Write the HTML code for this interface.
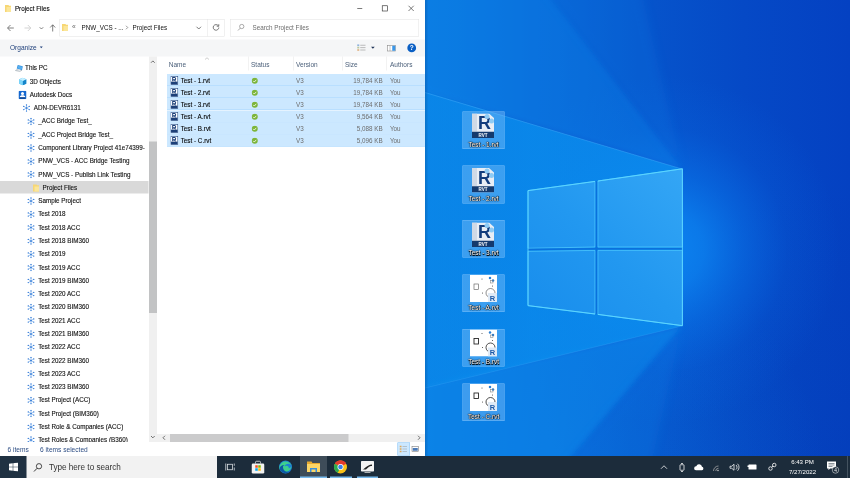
<!DOCTYPE html>
<html><head><meta charset="utf-8"><title>Project Files</title>
<style>
html,body{margin:0;padding:0;background:#0650c4;}
body{width:850px;height:478px;overflow:hidden;position:relative;font-family:"Liberation Sans",sans-serif;}
#wall{position:absolute;left:0;top:0;}
#ui{position:absolute;left:0;top:0;width:1700px;height:956px;transform:scale(.5);transform-origin:0 0;font-size:12.6px;color:#111;}
#ui *{box-sizing:border-box;}
.nt,.fn,#title{-webkit-text-stroke:.22px #111;}
.abs{position:absolute;}
#win{position:absolute;left:0;top:0;width:850px;height:911.7px;background:#fff;overflow:hidden;}
#title{position:absolute;left:29.8px;top:9px;line-height:16px;font-size:12.6px;color:#000;white-space:nowrap;}
#tool{position:absolute;left:0;top:78.6px;width:850px;height:34.4px;background:#f5f6f7;}
.box{position:absolute;border:1px solid #e2e2e2;background:#fff;}
.nr{position:absolute;left:0;width:296.6px;height:25px;margin-top:-0.2px;white-space:nowrap;}
.nr.sel{background:#d9d9d9;}
.ni{position:absolute;top:54%;}
.ni .ic{position:absolute;top:0;left:0;transform:translateY(-50%);}
.nt{position:absolute;top:0;line-height:26px;}
#nav{position:absolute;left:0;top:113px;width:298px;height:771px;overflow:hidden;}
#navin{position:absolute;left:0;top:-113px;}
.hd{position:absolute;top:121.2px;line-height:16px;color:#4c607a;font-size:13px;}
.sep{position:absolute;top:113px;width:1px;height:28px;background:#e5e5e5;}
.fr{position:absolute;left:334.4px;width:515.6px;height:24.1px;background:#cce8ff;border-bottom:1px solid #a6d6ff;white-space:nowrap;line-height:27.8px;}
.fr span{position:absolute;top:0;}
.fi{left:7px;top:3.6px !important;line-height:0;}
.fn{left:27px;color:#000;}
.fs{left:168.300px;top:6.400px !important;line-height:0;}
.fv{left:257.600px;color:#6d6d6d;}
.fz{right:84.500px;color:#6d6d6d;}
.fa{left:445.600px;color:#6d6d6d;}
#status{position:absolute;left:0;top:884.5px;width:850px;height:27px;background:#fff;color:#2f4f85;line-height:29.5px;font-size:13.2px;}
#task{position:absolute;left:0;top:911.7px;width:1700px;height:44.3px;background:#1c2c3b;}
.dk{position:absolute;left:925.4px;width:83.6px;height:75.2px;background:rgba(150,205,255,.36);border:1px solid rgba(170,215,255,.55);}
.dimg{position:absolute;}
.dl{position:absolute;left:-10px;right:-10px;top:58px;text-align:center;color:#fff;font-size:12.9px;line-height:14px;text-shadow:0 1px 2px #000,0 0 3px #000,1px 1px 1px #000,0 0 2px #000;white-space:nowrap;}
.tb{position:absolute;top:0;height:44.8px;}
.ul{position:absolute;bottom:0;height:2.6px;background:#76b9ed;}
.tray{position:absolute;color:#fff;font-size:12.2px;line-height:13px;text-align:center;white-space:nowrap;}
</style></head><body>
<svg id="wall" width="850" height="478" viewBox="0 0 850 478">
<defs>
<linearGradient id="bg" x1="425" y1="0" x2="850" y2="0" gradientUnits="userSpaceOnUse">
<stop offset="0" stop-color="#0a7ce2"/><stop offset=".25" stop-color="#0868d8"/><stop offset=".5" stop-color="#0655cc"/><stop offset=".75" stop-color="#0549c6"/><stop offset="1" stop-color="#0441c2"/></linearGradient>
<radialGradient id="bot" cx="560" cy="500" r="270" gradientUnits="userSpaceOnUse">
<stop offset="0" stop-color="#0a7ae6" stop-opacity=".4"/><stop offset=".5" stop-color="#0a7ae6" stop-opacity=".22"/><stop offset="1" stop-color="#0a7ae6" stop-opacity="0"/></radialGradient>
<radialGradient id="dark" cx="850" cy="478" r="300" gradientUnits="userSpaceOnUse">
<stop offset="0" stop-color="#032c8c" stop-opacity=".12"/><stop offset="1" stop-color="#032c8c" stop-opacity="0"/></radialGradient>
<linearGradient id="beam" x1="425" y1="0" x2="690" y2="0" gradientUnits="userSpaceOnUse">
<stop offset="0" stop-color="#0a8cec" stop-opacity=".6"/><stop offset=".4" stop-color="#0a8eee" stop-opacity=".8"/><stop offset="1" stop-color="#0c90f0" stop-opacity=".8"/></linearGradient>
<linearGradient id="beam2" x1="425" y1="0" x2="690" y2="0" gradientUnits="userSpaceOnUse">
<stop offset="0" stop-color="#0a8cec" stop-opacity=".1"/><stop offset="1" stop-color="#0c90f0" stop-opacity=".6"/></linearGradient>
<radialGradient id="glow" cx="665" cy="250" r="175" gradientUnits="userSpaceOnUse">
<stop offset="0" stop-color="#0c86f2" stop-opacity=".95"/><stop offset=".22" stop-color="#0c82f0" stop-opacity=".82"/><stop offset=".45" stop-color="#0a7aee" stop-opacity=".48"/><stop offset=".7" stop-color="#0a74ec" stop-opacity=".15"/><stop offset="1" stop-color="#0a74ec" stop-opacity="0"/></radialGradient>
<linearGradient id="pane" x1="528" y1="330" x2="683" y2="170" gradientUnits="userSpaceOnUse">
<stop offset="0" stop-color="#178cec"/><stop offset=".5" stop-color="#2298f0"/><stop offset="1" stop-color="#34a6f5"/></linearGradient>
<filter id="bl3" x="-20%" y="-20%" width="140%" height="140%"><feGaussianBlur stdDeviation="2.5"/></filter>
<filter id="bl" x="-20%" y="-20%" width="140%" height="140%"><feGaussianBlur stdDeviation="5"/></filter>
</defs>
<rect width="850" height="478" fill="url(#bg)"/>
<rect width="850" height="478" fill="url(#bot)"/>
<rect width="850" height="478" fill="url(#dark)"/>
<rect width="850" height="478" fill="url(#glow)"/>
<polygon points="682,169 415,88 415,-15 540,-15" fill="#0a82e8" opacity=".42" filter="url(#bl3)"/>
<polygon points="682,169 540,-15 640,-15" fill="#0a78e2" opacity=".25" filter="url(#bl)"/>
<polygon points="682,326 420,386 420,470 560,470" fill="#0a88ea" opacity=".62" filter="url(#bl3)"/>
<polygon points="682,326 560,470 650,470" fill="#0a78e2" opacity=".3" filter="url(#bl)"/>
<polygon points="425,92.500 682,169 682,326 425,388" fill="url(#beam)"/>
<path d="M425,92.500L682,169" stroke="#4db4ff" stroke-opacity=".45" stroke-width=".9" fill="none"/>
<path d="M425,388L682,326" stroke="#4db4ff" stroke-opacity=".25" stroke-width=".9" fill="none"/>
<rect x="527" y="168" width="156" height="158" fill="#0a72de" opacity="0"/>
<g stroke="#56d0ff" stroke-width=".7" fill="url(#pane)">
<polygon points="528,190.600 595,181.400 595,247 528,248.300"/>
<polygon points="597.900,181 682.400,168.800 682.400,247 597.900,247"/>
<polygon points="528,251.300 595,250.400 595,314 528,305.600"/>
<polygon points="597.900,250.400 682.400,250.400 682.400,325.700 597.900,314.400"/>
</g>
<path d="M596.450,181.200V314.200M528,249.600L595,248.700H682.400" stroke="#0b70dc" stroke-width="1.500" fill="none"/>
<path d="M528,190.600L595,181.400M597.900,181L682.400,168.800V325.700L597.900,314.400M595,314L528,305.600V190.600" stroke="#5fd8ff" stroke-width=".9" fill="none"/>
</svg>

<div id="ui">
<div class="dk" style="top:222.6px"><svg class="dimg" style="left:18px;top:3.600px" width="44" height="49" viewBox="0 0 44 49"><path d="M0 0h34l10 9v40H0z" fill="#e9eef5"/><path d="M0 0h10v36H0z" fill="#cfd9e6"/><rect x="0" y="36.500" width="44" height="12.500" fill="#143a6e"/><text x="25" y="31.500" font-family="Liberation Sans, sans-serif" font-weight="bold" font-size="36" fill="#123c7c" text-anchor="middle">R</text><circle cx="30" cy="6" r="5" fill="#8ecbf5"/><circle cx="39" cy="15" r="5" fill="#8ecbf5"/><text x="22" y="46.500" font-family="Liberation Sans, sans-serif" font-weight="bold" font-size="9" fill="#fff" text-anchor="middle">RVT</text></svg><span class="dl">Test - 1.rvt</span></div>
<div class="dk" style="top:331.4px"><svg class="dimg" style="left:18px;top:3.600px" width="44" height="49" viewBox="0 0 44 49"><path d="M0 0h34l10 9v40H0z" fill="#e9eef5"/><path d="M0 0h10v36H0z" fill="#cfd9e6"/><rect x="0" y="36.500" width="44" height="12.500" fill="#143a6e"/><text x="25" y="31.500" font-family="Liberation Sans, sans-serif" font-weight="bold" font-size="36" fill="#123c7c" text-anchor="middle">R</text><circle cx="30" cy="6" r="5" fill="#8ecbf5"/><circle cx="39" cy="15" r="5" fill="#8ecbf5"/><text x="22" y="46.500" font-family="Liberation Sans, sans-serif" font-weight="bold" font-size="9" fill="#fff" text-anchor="middle">RVT</text></svg><span class="dl">Test - 2.rvt</span></div>
<div class="dk" style="top:440.2px"><svg class="dimg" style="left:18px;top:3.600px" width="44" height="49" viewBox="0 0 44 49"><path d="M0 0h34l10 9v40H0z" fill="#e9eef5"/><path d="M0 0h10v36H0z" fill="#cfd9e6"/><rect x="0" y="36.500" width="44" height="12.500" fill="#143a6e"/><text x="25" y="31.500" font-family="Liberation Sans, sans-serif" font-weight="bold" font-size="36" fill="#123c7c" text-anchor="middle">R</text><circle cx="30" cy="6" r="5" fill="#8ecbf5"/><circle cx="39" cy="15" r="5" fill="#8ecbf5"/><text x="22" y="46.500" font-family="Liberation Sans, sans-serif" font-weight="bold" font-size="9" fill="#fff" text-anchor="middle">RVT</text></svg><span class="dl">Test - 3.rvt</span></div>
<div class="dk" style="top:549.0px"><svg class="dimg" style="left:14px;top:0.400px" width="54" height="54" viewBox="0 0 54 54"><rect width="54" height="54" fill="#fff"/><rect x="8" y="18" width="9" height="11" fill="none" stroke="#555" stroke-width="1.200"/><circle cx="41" cy="36" r="9" fill="none" stroke="#444" stroke-width="1.200"/><rect x="36" y="36" width="18" height="18" fill="#dfeaf6"/><text x="45" y="51" font-family="Liberation Sans, sans-serif" font-weight="bold" font-size="15" fill="#1d5aa8" text-anchor="middle">R</text><circle cx="40" cy="6" r="2.500" fill="#2a7fd4"/><circle cx="46" cy="11" r="2.500" fill="#2a7fd4"/><rect x="41" y="11" width="5" height="5" fill="none" stroke="#777" stroke-width="1"/><circle cx="24" cy="8" r="1" fill="#333"/><circle cx="25" cy="36" r="1" fill="#333"/><circle cx="45" cy="22" r="1" fill="#333"/></svg><span class="dl">Test - A.rvt</span></div>
<div class="dk" style="top:657.8px"><svg class="dimg" style="left:14px;top:0.400px" width="54" height="54" viewBox="0 0 54 54"><rect width="54" height="54" fill="#fff"/><rect x="8" y="18" width="9" height="11" fill="none" stroke="#1a1a1a" stroke-width="1.700"/><circle cx="41" cy="36" r="9" fill="none" stroke="#222" stroke-width="1.600"/><rect x="36" y="36" width="18" height="18" fill="#dfeaf6"/><text x="45" y="51" font-family="Liberation Sans, sans-serif" font-weight="bold" font-size="15" fill="#1d5aa8" text-anchor="middle">R</text><circle cx="40" cy="6" r="2.500" fill="#2a7fd4"/><circle cx="46" cy="11" r="2.500" fill="#2a7fd4"/><rect x="41" y="11" width="5" height="5" fill="none" stroke="#777" stroke-width="1"/><circle cx="24" cy="8" r="1" fill="#333"/><circle cx="25" cy="36" r="1" fill="#333"/><circle cx="45" cy="22" r="1" fill="#333"/></svg><span class="dl">Test - B.rvt</span></div>
<div class="dk" style="top:766.6px"><svg class="dimg" style="left:14px;top:0.400px" width="54" height="54" viewBox="0 0 54 54"><rect width="54" height="54" fill="#fff"/><rect x="8" y="18" width="9" height="11" fill="none" stroke="#1a1a1a" stroke-width="1.700"/><circle cx="41" cy="36" r="9" fill="none" stroke="#222" stroke-width="1.600"/><rect x="36" y="36" width="18" height="18" fill="#dfeaf6"/><text x="45" y="51" font-family="Liberation Sans, sans-serif" font-weight="bold" font-size="15" fill="#1d5aa8" text-anchor="middle">R</text><circle cx="40" cy="6" r="2.500" fill="#2a7fd4"/><circle cx="46" cy="11" r="2.500" fill="#2a7fd4"/><rect x="41" y="11" width="5" height="5" fill="none" stroke="#777" stroke-width="1"/><circle cx="24" cy="8" r="1" fill="#333"/><circle cx="25" cy="36" r="1" fill="#333"/><circle cx="45" cy="22" r="1" fill="#333"/></svg><span class="dl">Test - C.rvt</span></div>
<div id="win">
 <svg class="abs" style="left:10px;top:8.800px" width="12" height="16" viewBox="0 0 12 16"><path d="M0 1h7l1 1.500h4V15H0z" fill="#f7d774"/><path d="M3 5h9v10H3z" fill="#fbe69a"/></svg>
 <div id="title">Project Files</div>
 <!-- window controls -->
 <svg class="abs" style="left:700px;top:0" width="150" height="36" viewBox="0 0 150 36"><g stroke="#333" stroke-width="1.300" fill="none"><path d="M14.500 17h10"/><rect x="64.500" y="11.500" width="10.500" height="10.500"/><path d="M117 11.500l10.500 10.500M127.500 11.500l-10.500 10.500"/></g></svg>
 <!-- nav arrows -->
 <svg class="abs" style="left:0;top:38px" width="120" height="36" viewBox="0 0 120 36"><g fill="none" stroke-width="1.500"><path d="M27.600 18h-12M21 12l-6 6 6 6" stroke="#555"/><path d="M49 18h12M55.600 12l6 6-6 6" stroke="#c4c4c4"/><path d="M79.400 16.500l3.500 3.500 3.500-3.500" stroke="#555"/><path d="M105.400 25V12M100.400 17l5-5.500 5 5.500" stroke="#555"/></g></svg>
 <div class="box" style="left:118.800px;top:38.200px;width:330.200px;height:34.800px"></div>
 <div class="abs" style="left:414.600px;top:38.200px;width:1px;height:34.800px;background:#e2e2e2"></div>
 <svg class="abs" style="left:124px;top:46.500px" width="12" height="16" viewBox="0 0 12 16"><path d="M0 1h7l1 1.500h4V15H0z" fill="#f7d774"/><path d="M3 5h9v10H3z" fill="#fbe69a"/></svg>
 <div class="abs" style="left:144px;top:44.500px;line-height:16px;color:#666;font-size:13.500px">«</div>
 <div class="abs" style="left:163px;top:47.500px;line-height:16px;white-space:nowrap">PNW_VCS - ...</div>
 <svg class="abs" style="left:250px;top:50px" width="8" height="10" viewBox="0 0 8 10"><path d="M2 1.500l3.500 3.500L2 8.500" stroke="#555" stroke-width="1.200" fill="none"/></svg>
 <div class="abs" style="left:265px;top:47.500px;line-height:16px;white-space:nowrap">Project Files</div>
 <svg class="abs" style="left:390px;top:50px" width="16" height="12" viewBox="0 0 16 12"><path d="M3 3.500l4.500 4.500L12 3.500" stroke="#444" stroke-width="1.400" fill="none"/></svg>
 <svg class="abs" style="left:424px;top:47px" width="16" height="16" viewBox="0 0 16 16"><path d="M12.500 4.500A5.600 5.600 0 1 0 13.600 8" stroke="#444" stroke-width="1.400" fill="none"/><path d="M13.500 1.500v4h-4" stroke="#444" stroke-width="1.400" fill="none"/></svg>
 <div class="box" style="left:459.800px;top:38.200px;width:378px;height:34.800px"></div>
 <svg class="abs" style="left:474px;top:47px" width="16" height="16" viewBox="0 0 16 16"><circle cx="9.500" cy="6" r="4.300" stroke="#777" stroke-width="1.200" fill="none"/><path d="M6.500 9.300L2 14" stroke="#777" stroke-width="1.300"/></svg>
 <div class="abs" style="left:505px;top:47.500px;line-height:16px;color:#6d6d6d;white-space:nowrap">Search Project Files</div>
 <div id="tool"></div>
 <div class="abs" style="left:20px;top:87px;line-height:16px;color:#1e3f7a;font-size:13.100px;white-space:nowrap">Organize</div>
 <svg class="abs" style="left:79px;top:92px" width="8" height="6" viewBox="0 0 8 6"><path d="M.5 1h6L3.500 4.500z" fill="#1e3f7a"/></svg>
 <!-- toolbar right icons -->
 <svg class="abs" style="left:710px;top:84px" width="130" height="24" viewBox="0 0 130 24"><g stroke="#9a9a9a" stroke-width="1.300"><path d="M10.500 6.500h10.500M10.500 11.200h10.500M10.500 16h10.500"/></g><g><rect x="4.500" y="4.800" width="4" height="3.400" fill="#8fb2dc"/><rect x="4.500" y="9.500" width="4" height="3.400" fill="#b9c7a0"/><rect x="4.500" y="14.300" width="4" height="3.400" fill="#e0b487"/></g><path d="M32 9.500h7.500l-3.750 4.200z" fill="#1e3255"/><rect x="65" y="7" width="16" height="11" fill="#fff" stroke="#8a8a8a" stroke-width="1.200"/><path d="M70 7v11" stroke="#8a8a8a" stroke-width="1"/><rect x="74.500" y="7.500" width="6" height="10" fill="#3a96e8"/><circle cx="113.400" cy="11.800" r="8.800" fill="#0a5fc4"/><text x="113.400" y="16.400" font-family="Liberation Sans, sans-serif" font-weight="bold" font-size="13" fill="#fff" text-anchor="middle">?</text></svg>

 <div id="nav"><div id="navin">
<div class="nr" style="top:123.42px"><span class="ni" style="left:30.0px"><svg class="ic" width="17" height="15" viewBox="0 0 17 15"><path d="M5.500 0.500l10 2.500-1.500 8L3.500 7.500z" fill="#2f8fdc"/><path d="M6.300 1.800l8.200 2-1.200 5.700L4.800 6.800z" fill="#56aef0"/><path d="M0.500 11.500l3-3.500 10.500 3z" fill="#c9d2da"/><path d="M0.500 11.500l9 1.800 4.500-2.300" stroke="#7b8894" stroke-width="1" fill="none"/></svg></span><span class="nt" style="left:50.2px">This PC</span></div>
<div class="nr" style="top:149.98px"><span class="ni" style="left:37.4px"><svg class="ic" width="17" height="16" viewBox="0 0 17 16"><path d="M8.5 0.5l7 3v9l-7 3-7-3v-9z" fill="#35b6f0"/><path d="M8.5 7l7-3.5v9l-7 3z" fill="#1684c8"/><path d="M8.5 7l-7-3.5v9l7 3z" fill="#7fd6fa"/><path d="M8.5 0.5l7 3-7 3.5-7-3.500z" fill="#c6efff"/></svg></span><span class="nt" style="left:59.4px">3D Objects</span></div>
<div class="nr" style="top:176.54px"><span class="ni" style="left:37.4px"><svg class="ic" width="16" height="17" viewBox="0 0 16 17"><rect x="0" y="0" width="16" height="17" rx="2.5" fill="#1568d0"/><circle cx="8" cy="5.6" r="3" fill="#fff"/><path d="M2.5 13c0-3 2.500-4 5.500-4s5.500 1 5.500 4z" fill="#fff"/><rect x="2.5" y="13.500" width="11" height="2" fill="#0a2f6b"/></svg></span><span class="nt" style="left:59.4px">Autodesk Docs</span></div>
<div class="nr" style="top:203.10px"><span class="ni" style="left:45.4px"><svg class="ic" width="16" height="16" viewBox="0 0 16 16"><g stroke="#5b9be6" stroke-width="1.1" fill="none"><path d="M8 1.5v13M2.4 4.7l11.2 6.6M13.6 4.7L2.4 11.3"/></g><g fill="#2f78d6"><circle cx="8" cy="1.8" r="1.35"/><circle cx="8" cy="14.2" r="1.35"/><circle cx="2.5" cy="4.8" r="1.35"/><circle cx="13.5" cy="4.8" r="1.35"/><circle cx="2.5" cy="11.2" r="1.35"/><circle cx="13.5" cy="11.2" r="1.35"/><circle cx="8" cy="8" r="1.7"/></g></svg></span><span class="nt" style="left:67.6px">ADN-DEVR6131</span></div>
<div class="nr" style="top:229.66px"><span class="ni" style="left:54.2px"><svg class="ic" width="16" height="16" viewBox="0 0 16 16"><g stroke="#5b9be6" stroke-width="1.1" fill="none"><path d="M8 1.5v13M2.4 4.7l11.2 6.6M13.6 4.7L2.4 11.3"/></g><g fill="#2f78d6"><circle cx="8" cy="1.8" r="1.35"/><circle cx="8" cy="14.2" r="1.35"/><circle cx="2.5" cy="4.8" r="1.35"/><circle cx="13.5" cy="4.8" r="1.35"/><circle cx="2.5" cy="11.2" r="1.35"/><circle cx="13.5" cy="11.2" r="1.35"/><circle cx="8" cy="8" r="1.7"/></g></svg></span><span class="nt" style="left:76.4px">_ACC Bridge Test_</span></div>
<div class="nr" style="top:256.22px"><span class="ni" style="left:54.2px"><svg class="ic" width="16" height="16" viewBox="0 0 16 16"><g stroke="#5b9be6" stroke-width="1.1" fill="none"><path d="M8 1.5v13M2.4 4.7l11.2 6.6M13.6 4.7L2.4 11.3"/></g><g fill="#2f78d6"><circle cx="8" cy="1.8" r="1.35"/><circle cx="8" cy="14.2" r="1.35"/><circle cx="2.5" cy="4.8" r="1.35"/><circle cx="13.5" cy="4.8" r="1.35"/><circle cx="2.5" cy="11.2" r="1.35"/><circle cx="13.5" cy="11.2" r="1.35"/><circle cx="8" cy="8" r="1.7"/></g></svg></span><span class="nt" style="left:76.4px">_ACC Project Bridge Test_</span></div>
<div class="nr" style="top:282.78px"><span class="ni" style="left:54.2px"><svg class="ic" width="16" height="16" viewBox="0 0 16 16"><g stroke="#5b9be6" stroke-width="1.1" fill="none"><path d="M8 1.5v13M2.4 4.7l11.2 6.6M13.6 4.7L2.4 11.3"/></g><g fill="#2f78d6"><circle cx="8" cy="1.8" r="1.35"/><circle cx="8" cy="14.2" r="1.35"/><circle cx="2.5" cy="4.8" r="1.35"/><circle cx="13.5" cy="4.8" r="1.35"/><circle cx="2.5" cy="11.2" r="1.35"/><circle cx="13.5" cy="11.2" r="1.35"/><circle cx="8" cy="8" r="1.7"/></g></svg></span><span class="nt" style="left:76.4px">Component Library Project 41e74399-</span></div>
<div class="nr" style="top:309.34px"><span class="ni" style="left:54.2px"><svg class="ic" width="16" height="16" viewBox="0 0 16 16"><g stroke="#5b9be6" stroke-width="1.1" fill="none"><path d="M8 1.5v13M2.4 4.7l11.2 6.6M13.6 4.7L2.4 11.3"/></g><g fill="#2f78d6"><circle cx="8" cy="1.8" r="1.35"/><circle cx="8" cy="14.2" r="1.35"/><circle cx="2.5" cy="4.8" r="1.35"/><circle cx="13.5" cy="4.8" r="1.35"/><circle cx="2.5" cy="11.2" r="1.35"/><circle cx="13.5" cy="11.2" r="1.35"/><circle cx="8" cy="8" r="1.7"/></g></svg></span><span class="nt" style="left:76.4px">PNW_VCS - ACC Bridge Testing</span></div>
<div class="nr" style="top:335.90px"><span class="ni" style="left:54.2px"><svg class="ic" width="16" height="16" viewBox="0 0 16 16"><g stroke="#5b9be6" stroke-width="1.1" fill="none"><path d="M8 1.5v13M2.4 4.7l11.2 6.6M13.6 4.7L2.4 11.3"/></g><g fill="#2f78d6"><circle cx="8" cy="1.8" r="1.35"/><circle cx="8" cy="14.2" r="1.35"/><circle cx="2.5" cy="4.8" r="1.35"/><circle cx="13.5" cy="4.8" r="1.35"/><circle cx="2.5" cy="11.2" r="1.35"/><circle cx="13.5" cy="11.2" r="1.35"/><circle cx="8" cy="8" r="1.7"/></g></svg></span><span class="nt" style="left:76.4px">PNW_VCS - Publish Link Testing</span></div>
<div class="nr sel" style="top:362.46px"><span class="ni" style="left:66.4px"><svg class="ic" width="12" height="16" viewBox="0 0 12 16"><path d="M0 1h7l1 1.5h4V15H0z" fill="#f7d774"/><path d="M3 5h9v10H3z" fill="#fbe69a"/></svg></span><span class="nt" style="left:85.2px">Project Files</span></div>
<div class="nr" style="top:389.02px"><span class="ni" style="left:54.2px"><svg class="ic" width="16" height="16" viewBox="0 0 16 16"><g stroke="#5b9be6" stroke-width="1.1" fill="none"><path d="M8 1.5v13M2.4 4.7l11.2 6.6M13.6 4.7L2.4 11.3"/></g><g fill="#2f78d6"><circle cx="8" cy="1.8" r="1.35"/><circle cx="8" cy="14.2" r="1.35"/><circle cx="2.5" cy="4.8" r="1.35"/><circle cx="13.5" cy="4.8" r="1.35"/><circle cx="2.5" cy="11.2" r="1.35"/><circle cx="13.5" cy="11.2" r="1.35"/><circle cx="8" cy="8" r="1.7"/></g></svg></span><span class="nt" style="left:76.4px">Sample Project</span></div>
<div class="nr" style="top:415.58px"><span class="ni" style="left:54.2px"><svg class="ic" width="16" height="16" viewBox="0 0 16 16"><g stroke="#5b9be6" stroke-width="1.1" fill="none"><path d="M8 1.5v13M2.4 4.7l11.2 6.6M13.6 4.7L2.4 11.3"/></g><g fill="#2f78d6"><circle cx="8" cy="1.8" r="1.35"/><circle cx="8" cy="14.2" r="1.35"/><circle cx="2.5" cy="4.8" r="1.35"/><circle cx="13.5" cy="4.8" r="1.35"/><circle cx="2.5" cy="11.2" r="1.35"/><circle cx="13.5" cy="11.2" r="1.35"/><circle cx="8" cy="8" r="1.7"/></g></svg></span><span class="nt" style="left:76.4px">Test 2018</span></div>
<div class="nr" style="top:442.14px"><span class="ni" style="left:54.2px"><svg class="ic" width="16" height="16" viewBox="0 0 16 16"><g stroke="#5b9be6" stroke-width="1.1" fill="none"><path d="M8 1.5v13M2.4 4.7l11.2 6.6M13.6 4.7L2.4 11.3"/></g><g fill="#2f78d6"><circle cx="8" cy="1.8" r="1.35"/><circle cx="8" cy="14.2" r="1.35"/><circle cx="2.5" cy="4.8" r="1.35"/><circle cx="13.5" cy="4.8" r="1.35"/><circle cx="2.5" cy="11.2" r="1.35"/><circle cx="13.5" cy="11.2" r="1.35"/><circle cx="8" cy="8" r="1.7"/></g></svg></span><span class="nt" style="left:76.4px">Test 2018 ACC</span></div>
<div class="nr" style="top:468.70px"><span class="ni" style="left:54.2px"><svg class="ic" width="16" height="16" viewBox="0 0 16 16"><g stroke="#5b9be6" stroke-width="1.1" fill="none"><path d="M8 1.5v13M2.4 4.7l11.2 6.6M13.6 4.7L2.4 11.3"/></g><g fill="#2f78d6"><circle cx="8" cy="1.8" r="1.35"/><circle cx="8" cy="14.2" r="1.35"/><circle cx="2.5" cy="4.8" r="1.35"/><circle cx="13.5" cy="4.8" r="1.35"/><circle cx="2.5" cy="11.2" r="1.35"/><circle cx="13.5" cy="11.2" r="1.35"/><circle cx="8" cy="8" r="1.7"/></g></svg></span><span class="nt" style="left:76.4px">Test 2018 BIM360</span></div>
<div class="nr" style="top:495.26px"><span class="ni" style="left:54.2px"><svg class="ic" width="16" height="16" viewBox="0 0 16 16"><g stroke="#5b9be6" stroke-width="1.1" fill="none"><path d="M8 1.5v13M2.4 4.7l11.2 6.6M13.6 4.7L2.4 11.3"/></g><g fill="#2f78d6"><circle cx="8" cy="1.8" r="1.35"/><circle cx="8" cy="14.2" r="1.35"/><circle cx="2.5" cy="4.8" r="1.35"/><circle cx="13.5" cy="4.8" r="1.35"/><circle cx="2.5" cy="11.2" r="1.35"/><circle cx="13.5" cy="11.2" r="1.35"/><circle cx="8" cy="8" r="1.7"/></g></svg></span><span class="nt" style="left:76.4px">Test 2019</span></div>
<div class="nr" style="top:521.82px"><span class="ni" style="left:54.2px"><svg class="ic" width="16" height="16" viewBox="0 0 16 16"><g stroke="#5b9be6" stroke-width="1.1" fill="none"><path d="M8 1.5v13M2.4 4.7l11.2 6.6M13.6 4.7L2.4 11.3"/></g><g fill="#2f78d6"><circle cx="8" cy="1.8" r="1.35"/><circle cx="8" cy="14.2" r="1.35"/><circle cx="2.5" cy="4.8" r="1.35"/><circle cx="13.5" cy="4.8" r="1.35"/><circle cx="2.5" cy="11.2" r="1.35"/><circle cx="13.5" cy="11.2" r="1.35"/><circle cx="8" cy="8" r="1.7"/></g></svg></span><span class="nt" style="left:76.4px">Test 2019 ACC</span></div>
<div class="nr" style="top:548.38px"><span class="ni" style="left:54.2px"><svg class="ic" width="16" height="16" viewBox="0 0 16 16"><g stroke="#5b9be6" stroke-width="1.1" fill="none"><path d="M8 1.5v13M2.4 4.7l11.2 6.6M13.6 4.7L2.4 11.3"/></g><g fill="#2f78d6"><circle cx="8" cy="1.8" r="1.35"/><circle cx="8" cy="14.2" r="1.35"/><circle cx="2.5" cy="4.8" r="1.35"/><circle cx="13.5" cy="4.8" r="1.35"/><circle cx="2.5" cy="11.2" r="1.35"/><circle cx="13.5" cy="11.2" r="1.35"/><circle cx="8" cy="8" r="1.7"/></g></svg></span><span class="nt" style="left:76.4px">Test 2019 BIM360</span></div>
<div class="nr" style="top:574.94px"><span class="ni" style="left:54.2px"><svg class="ic" width="16" height="16" viewBox="0 0 16 16"><g stroke="#5b9be6" stroke-width="1.1" fill="none"><path d="M8 1.5v13M2.4 4.7l11.2 6.6M13.6 4.7L2.4 11.3"/></g><g fill="#2f78d6"><circle cx="8" cy="1.8" r="1.35"/><circle cx="8" cy="14.2" r="1.35"/><circle cx="2.5" cy="4.8" r="1.35"/><circle cx="13.5" cy="4.8" r="1.35"/><circle cx="2.5" cy="11.2" r="1.35"/><circle cx="13.5" cy="11.2" r="1.35"/><circle cx="8" cy="8" r="1.7"/></g></svg></span><span class="nt" style="left:76.4px">Test 2020 ACC</span></div>
<div class="nr" style="top:601.50px"><span class="ni" style="left:54.2px"><svg class="ic" width="16" height="16" viewBox="0 0 16 16"><g stroke="#5b9be6" stroke-width="1.1" fill="none"><path d="M8 1.5v13M2.4 4.7l11.2 6.6M13.6 4.7L2.4 11.3"/></g><g fill="#2f78d6"><circle cx="8" cy="1.8" r="1.35"/><circle cx="8" cy="14.2" r="1.35"/><circle cx="2.5" cy="4.8" r="1.35"/><circle cx="13.5" cy="4.8" r="1.35"/><circle cx="2.5" cy="11.2" r="1.35"/><circle cx="13.5" cy="11.2" r="1.35"/><circle cx="8" cy="8" r="1.7"/></g></svg></span><span class="nt" style="left:76.4px">Test 2020 BIM360</span></div>
<div class="nr" style="top:628.06px"><span class="ni" style="left:54.2px"><svg class="ic" width="16" height="16" viewBox="0 0 16 16"><g stroke="#5b9be6" stroke-width="1.1" fill="none"><path d="M8 1.5v13M2.4 4.7l11.2 6.6M13.6 4.7L2.4 11.3"/></g><g fill="#2f78d6"><circle cx="8" cy="1.8" r="1.35"/><circle cx="8" cy="14.2" r="1.35"/><circle cx="2.5" cy="4.8" r="1.35"/><circle cx="13.5" cy="4.8" r="1.35"/><circle cx="2.5" cy="11.2" r="1.35"/><circle cx="13.5" cy="11.2" r="1.35"/><circle cx="8" cy="8" r="1.7"/></g></svg></span><span class="nt" style="left:76.4px">Test 2021 ACC</span></div>
<div class="nr" style="top:654.62px"><span class="ni" style="left:54.2px"><svg class="ic" width="16" height="16" viewBox="0 0 16 16"><g stroke="#5b9be6" stroke-width="1.1" fill="none"><path d="M8 1.5v13M2.4 4.7l11.2 6.6M13.6 4.7L2.4 11.3"/></g><g fill="#2f78d6"><circle cx="8" cy="1.8" r="1.35"/><circle cx="8" cy="14.2" r="1.35"/><circle cx="2.5" cy="4.8" r="1.35"/><circle cx="13.5" cy="4.8" r="1.35"/><circle cx="2.5" cy="11.2" r="1.35"/><circle cx="13.5" cy="11.2" r="1.35"/><circle cx="8" cy="8" r="1.7"/></g></svg></span><span class="nt" style="left:76.4px">Test 2021 BIM360</span></div>
<div class="nr" style="top:681.18px"><span class="ni" style="left:54.2px"><svg class="ic" width="16" height="16" viewBox="0 0 16 16"><g stroke="#5b9be6" stroke-width="1.1" fill="none"><path d="M8 1.5v13M2.4 4.7l11.2 6.6M13.6 4.7L2.4 11.3"/></g><g fill="#2f78d6"><circle cx="8" cy="1.8" r="1.35"/><circle cx="8" cy="14.2" r="1.35"/><circle cx="2.5" cy="4.8" r="1.35"/><circle cx="13.5" cy="4.8" r="1.35"/><circle cx="2.5" cy="11.2" r="1.35"/><circle cx="13.5" cy="11.2" r="1.35"/><circle cx="8" cy="8" r="1.7"/></g></svg></span><span class="nt" style="left:76.4px">Test 2022 ACC</span></div>
<div class="nr" style="top:707.74px"><span class="ni" style="left:54.2px"><svg class="ic" width="16" height="16" viewBox="0 0 16 16"><g stroke="#5b9be6" stroke-width="1.1" fill="none"><path d="M8 1.5v13M2.4 4.7l11.2 6.6M13.6 4.7L2.4 11.3"/></g><g fill="#2f78d6"><circle cx="8" cy="1.8" r="1.35"/><circle cx="8" cy="14.2" r="1.35"/><circle cx="2.5" cy="4.8" r="1.35"/><circle cx="13.5" cy="4.8" r="1.35"/><circle cx="2.5" cy="11.2" r="1.35"/><circle cx="13.5" cy="11.2" r="1.35"/><circle cx="8" cy="8" r="1.7"/></g></svg></span><span class="nt" style="left:76.4px">Test 2022 BIM360</span></div>
<div class="nr" style="top:734.30px"><span class="ni" style="left:54.2px"><svg class="ic" width="16" height="16" viewBox="0 0 16 16"><g stroke="#5b9be6" stroke-width="1.1" fill="none"><path d="M8 1.5v13M2.4 4.7l11.2 6.6M13.6 4.7L2.4 11.3"/></g><g fill="#2f78d6"><circle cx="8" cy="1.8" r="1.35"/><circle cx="8" cy="14.2" r="1.35"/><circle cx="2.5" cy="4.8" r="1.35"/><circle cx="13.5" cy="4.8" r="1.35"/><circle cx="2.5" cy="11.2" r="1.35"/><circle cx="13.5" cy="11.2" r="1.35"/><circle cx="8" cy="8" r="1.7"/></g></svg></span><span class="nt" style="left:76.4px">Test 2023 ACC</span></div>
<div class="nr" style="top:760.86px"><span class="ni" style="left:54.2px"><svg class="ic" width="16" height="16" viewBox="0 0 16 16"><g stroke="#5b9be6" stroke-width="1.1" fill="none"><path d="M8 1.5v13M2.4 4.7l11.2 6.6M13.6 4.7L2.4 11.3"/></g><g fill="#2f78d6"><circle cx="8" cy="1.8" r="1.35"/><circle cx="8" cy="14.2" r="1.35"/><circle cx="2.5" cy="4.8" r="1.35"/><circle cx="13.5" cy="4.8" r="1.35"/><circle cx="2.5" cy="11.2" r="1.35"/><circle cx="13.5" cy="11.2" r="1.35"/><circle cx="8" cy="8" r="1.7"/></g></svg></span><span class="nt" style="left:76.4px">Test 2023 BIM360</span></div>
<div class="nr" style="top:787.42px"><span class="ni" style="left:54.2px"><svg class="ic" width="16" height="16" viewBox="0 0 16 16"><g stroke="#5b9be6" stroke-width="1.1" fill="none"><path d="M8 1.5v13M2.4 4.7l11.2 6.6M13.6 4.7L2.4 11.3"/></g><g fill="#2f78d6"><circle cx="8" cy="1.8" r="1.35"/><circle cx="8" cy="14.2" r="1.35"/><circle cx="2.5" cy="4.8" r="1.35"/><circle cx="13.5" cy="4.8" r="1.35"/><circle cx="2.5" cy="11.2" r="1.35"/><circle cx="13.5" cy="11.2" r="1.35"/><circle cx="8" cy="8" r="1.7"/></g></svg></span><span class="nt" style="left:76.4px">Test Project (ACC)</span></div>
<div class="nr" style="top:813.98px"><span class="ni" style="left:54.2px"><svg class="ic" width="16" height="16" viewBox="0 0 16 16"><g stroke="#5b9be6" stroke-width="1.1" fill="none"><path d="M8 1.5v13M2.4 4.7l11.2 6.6M13.6 4.7L2.4 11.3"/></g><g fill="#2f78d6"><circle cx="8" cy="1.8" r="1.35"/><circle cx="8" cy="14.2" r="1.35"/><circle cx="2.5" cy="4.8" r="1.35"/><circle cx="13.5" cy="4.8" r="1.35"/><circle cx="2.5" cy="11.2" r="1.35"/><circle cx="13.5" cy="11.2" r="1.35"/><circle cx="8" cy="8" r="1.7"/></g></svg></span><span class="nt" style="left:76.4px">Test Project (BIM360)</span></div>
<div class="nr" style="top:840.54px"><span class="ni" style="left:54.2px"><svg class="ic" width="16" height="16" viewBox="0 0 16 16"><g stroke="#5b9be6" stroke-width="1.1" fill="none"><path d="M8 1.5v13M2.4 4.7l11.2 6.6M13.6 4.7L2.4 11.3"/></g><g fill="#2f78d6"><circle cx="8" cy="1.8" r="1.35"/><circle cx="8" cy="14.2" r="1.35"/><circle cx="2.5" cy="4.8" r="1.35"/><circle cx="13.5" cy="4.8" r="1.35"/><circle cx="2.5" cy="11.2" r="1.35"/><circle cx="13.5" cy="11.2" r="1.35"/><circle cx="8" cy="8" r="1.7"/></g></svg></span><span class="nt" style="left:76.4px">Test Role &amp; Companies (ACC)</span></div>
<div class="nr" style="top:867.10px"><span class="ni" style="left:54.2px"><svg class="ic" width="16" height="16" viewBox="0 0 16 16"><g stroke="#5b9be6" stroke-width="1.1" fill="none"><path d="M8 1.5v13M2.4 4.7l11.2 6.6M13.6 4.7L2.4 11.3"/></g><g fill="#2f78d6"><circle cx="8" cy="1.8" r="1.35"/><circle cx="8" cy="14.2" r="1.35"/><circle cx="2.5" cy="4.8" r="1.35"/><circle cx="13.5" cy="4.8" r="1.35"/><circle cx="2.5" cy="11.2" r="1.35"/><circle cx="13.5" cy="11.2" r="1.35"/><circle cx="8" cy="8" r="1.7"/></g></svg></span><span class="nt" style="left:76.4px">Test Roles &amp; Companies (B360)</span></div>
 </div></div>
 <!-- nav scrollbar -->
 <div class="abs" style="left:298.200px;top:113px;width:15.400px;height:771px;background:#f0f0f0"></div>
 <div class="abs" style="left:298.200px;top:282.800px;width:15.400px;height:343.200px;background:#c2c3c4"></div>
 <svg class="abs" style="left:298.200px;top:113px" width="16" height="20" viewBox="0 0 16 20"><path d="M4 12.500l3.700-3.700 3.700 3.700" stroke="#444" stroke-width="1.500" fill="none"/></svg>
 <svg class="abs" style="left:298.200px;top:864px" width="16" height="20" viewBox="0 0 16 20"><path d="M4 8l3.700 3.700L11.400 8" stroke="#444" stroke-width="1.500" fill="none"/></svg>
 <!-- headers -->
 <div class="hd" style="left:337.600px">Name</div>
 <div class="hd" style="left:502px">Status</div>
 <div class="hd" style="left:592px">Version</div>
 <div class="hd" style="left:690px">Size</div>
 <div class="hd" style="left:780px">Authors</div>
 <div class="sep" style="left:496px"></div><div class="sep" style="left:586px"></div><div class="sep" style="left:684px"></div><div class="sep" style="left:773px"></div>
 <svg class="abs" style="left:408px;top:113.500px" width="12" height="6" viewBox="0 0 12 6"><path d="M2 5l4-3.500 4 3.500" stroke="#9a9a9a" stroke-width="1" fill="none"/></svg>
<div class="fr" style="top:148.2px"><span class="fi"><svg width="15.200" height="17.800" viewBox="0 0 14 15" preserveAspectRatio="none"><rect x="0.5" y="0.5" width="13" height="14" fill="#fff" stroke="#1c3f78"/><rect x="1" y="9.500" width="12" height="4.500" fill="#1c3f78"/><path d="M4 2.500h3.500a2 2 0 0 1 0 4H4zM4 2.500v6.500M7 6.500l2.500 2.500" stroke="#1c3f78" stroke-width="1.800" fill="none"/></svg></span><span class="fn">Test - 1.rvt</span><span class="fs"><svg width="13" height="13" viewBox="0 0 13 13"><circle cx="6.500" cy="6.500" r="6" fill="#7db53a"/><path d="M3.500 6.800l2.200 2.200 3.800-4.300" stroke="#fff" stroke-width="1.600" fill="none"/></svg></span><span class="fv">V3</span><span class="fz">19,784 KB</span><span class="fa">You</span></div>
<div class="fr" style="top:172.3px"><span class="fi"><svg width="15.200" height="17.800" viewBox="0 0 14 15" preserveAspectRatio="none"><rect x="0.5" y="0.5" width="13" height="14" fill="#fff" stroke="#1c3f78"/><rect x="1" y="9.500" width="12" height="4.500" fill="#1c3f78"/><path d="M4 2.500h3.500a2 2 0 0 1 0 4H4zM4 2.500v6.500M7 6.500l2.500 2.500" stroke="#1c3f78" stroke-width="1.800" fill="none"/></svg></span><span class="fn">Test - 2.rvt</span><span class="fs"><svg width="13" height="13" viewBox="0 0 13 13"><circle cx="6.500" cy="6.500" r="6" fill="#7db53a"/><path d="M3.500 6.800l2.200 2.200 3.800-4.300" stroke="#fff" stroke-width="1.600" fill="none"/></svg></span><span class="fv">V3</span><span class="fz">19,784 KB</span><span class="fa">You</span></div>
<div class="fr" style="top:196.4px"><span class="fi"><svg width="15.200" height="17.800" viewBox="0 0 14 15" preserveAspectRatio="none"><rect x="0.5" y="0.5" width="13" height="14" fill="#fff" stroke="#1c3f78"/><rect x="1" y="9.500" width="12" height="4.500" fill="#1c3f78"/><path d="M4 2.500h3.500a2 2 0 0 1 0 4H4zM4 2.500v6.500M7 6.500l2.500 2.500" stroke="#1c3f78" stroke-width="1.800" fill="none"/></svg></span><span class="fn">Test - 3.rvt</span><span class="fs"><svg width="13" height="13" viewBox="0 0 13 13"><circle cx="6.500" cy="6.500" r="6" fill="#7db53a"/><path d="M3.500 6.800l2.200 2.200 3.800-4.300" stroke="#fff" stroke-width="1.600" fill="none"/></svg></span><span class="fv">V3</span><span class="fz">19,784 KB</span><span class="fa">You</span></div>
<div class="fr" style="top:220.5px"><span class="fi"><svg width="15.200" height="17.800" viewBox="0 0 14 15" preserveAspectRatio="none"><rect x="0.5" y="0.5" width="13" height="14" fill="#fff" stroke="#1c3f78"/><rect x="1" y="9.500" width="12" height="4.500" fill="#1c3f78"/><path d="M4 2.500h3.500a2 2 0 0 1 0 4H4zM4 2.500v6.500M7 6.500l2.500 2.500" stroke="#1c3f78" stroke-width="1.800" fill="none"/></svg></span><span class="fn">Test - A.rvt</span><span class="fs"><svg width="13" height="13" viewBox="0 0 13 13"><circle cx="6.500" cy="6.500" r="6" fill="#7db53a"/><path d="M3.500 6.800l2.200 2.200 3.800-4.300" stroke="#fff" stroke-width="1.600" fill="none"/></svg></span><span class="fv">V3</span><span class="fz">9,564 KB</span><span class="fa">You</span></div>
<div class="fr" style="top:244.6px"><span class="fi"><svg width="15.200" height="17.800" viewBox="0 0 14 15" preserveAspectRatio="none"><rect x="0.5" y="0.5" width="13" height="14" fill="#fff" stroke="#1c3f78"/><rect x="1" y="9.500" width="12" height="4.500" fill="#1c3f78"/><path d="M4 2.500h3.500a2 2 0 0 1 0 4H4zM4 2.500v6.500M7 6.500l2.500 2.500" stroke="#1c3f78" stroke-width="1.800" fill="none"/></svg></span><span class="fn">Test - B.rvt</span><span class="fs"><svg width="13" height="13" viewBox="0 0 13 13"><circle cx="6.500" cy="6.500" r="6" fill="#7db53a"/><path d="M3.500 6.800l2.200 2.200 3.800-4.300" stroke="#fff" stroke-width="1.600" fill="none"/></svg></span><span class="fv">V3</span><span class="fz">5,088 KB</span><span class="fa">You</span></div>
<div class="fr" style="top:268.7px"><span class="fi"><svg width="15.200" height="17.800" viewBox="0 0 14 15" preserveAspectRatio="none"><rect x="0.5" y="0.5" width="13" height="14" fill="#fff" stroke="#1c3f78"/><rect x="1" y="9.500" width="12" height="4.500" fill="#1c3f78"/><path d="M4 2.500h3.500a2 2 0 0 1 0 4H4zM4 2.500v6.500M7 6.500l2.500 2.500" stroke="#1c3f78" stroke-width="1.800" fill="none"/></svg></span><span class="fn">Test - C.rvt</span><span class="fs"><svg width="13" height="13" viewBox="0 0 13 13"><circle cx="6.500" cy="6.500" r="6" fill="#7db53a"/><path d="M3.500 6.800l2.200 2.200 3.800-4.300" stroke="#fff" stroke-width="1.600" fill="none"/></svg></span><span class="fv">V3</span><span class="fz">5,096 KB</span><span class="fa">You</span></div>
 <!-- h scrollbar -->
 <div class="abs" style="left:314px;top:868.200px;width:536px;height:15.800px;background:#f0f0f0"></div>
 <div class="abs" style="left:340px;top:868.200px;width:356.800px;height:15.800px;background:#cbcbcc"></div>
 <svg class="abs" style="left:320px;top:867.400px" width="16" height="17" viewBox="0 0 16 17"><path d="M10 4.500L6 8.500l4 4" stroke="#444" stroke-width="1.500" fill="none"/></svg>
 <svg class="abs" style="left:830px;top:867.400px" width="16" height="17" viewBox="0 0 16 17"><path d="M6 4.500l4 4-4 4" stroke="#444" stroke-width="1.500" fill="none"/></svg>
 <div id="status"><span class="abs" style="left:15px">6 items</span><span class="abs" style="left:80.200px">6 items selected</span>
  <div class="abs" style="left:795px;top:0.500px;width:25px;height:26px;background:#cce8ff;border:1px solid #8cc6f5"></div>
  <svg class="abs" style="left:797px;top:2.500px" width="44" height="22" viewBox="0 0 44 22"><g stroke="#999" stroke-width="1"><path d="M8 6h9M8 11h9M8 16h9"/></g><g fill="#e0a85a"><rect x="2.500" y="4.500" width="3.500" height="3"/><rect x="2.500" y="9.500" width="3.500" height="3"/><rect x="2.500" y="14.500" width="3.500" height="3"/></g><rect x="27" y="6" width="13" height="10" fill="#fff" stroke="#666"/><rect x="28.500" y="9" width="10" height="5.500" fill="#4a7ab8"/></svg>
 </div>
</div>
<div class="abs" style="left:850.400px;top:0;width:7px;height:911px;background:linear-gradient(90deg,rgba(10,60,120,.28),rgba(10,60,120,0))"></div>

<div id="task">
 <div class="tb" style="left:0;width:52.600px;background:#1f3142"></div>
 <svg class="abs" style="left:17.500px;top:13.500px" width="18" height="18" viewBox="0 0 18 18"><path d="M0 2.500l7.500-1v7H0zM8.500 1.300L18 0v8.500H8.500zM0 9.500h7.500v7L0 15.500zM8.500 9.500H18V18l-9.500-1.300z" fill="#fff"/></svg>
 <div class="tb" style="left:52.600px;width:381.200px;background:#f2f2f2"></div>
 <svg class="abs" style="left:66px;top:13px" width="20" height="20" viewBox="0 0 20 20"><circle cx="12" cy="7.500" r="5.300" stroke="#222" stroke-width="1.600" fill="none"/><path d="M8.200 11.500L2 18" stroke="#222" stroke-width="1.800"/></svg>
 <div class="abs" style="left:97.800px;top:12px;line-height:20px;font-size:16.300px;color:#333;white-space:nowrap">Type here to search</div>
 <!-- task view -->
 <svg class="abs" style="left:448px;top:11px" width="26" height="22" viewBox="0 0 26 22"><g stroke="#e4e8ec" stroke-width="1.500" fill="none"><rect x="7" y="5.500" width="10" height="11"/><path d="M3.500 4v14M20.500 4v4.500M20.500 12v6"/></g></svg>
 <!-- store -->
 <svg class="abs" style="left:502px;top:8px" width="28" height="28" viewBox="0 0 28 28"><path d="M9 7V4.500a2 2 0 0 1 2-2h6a2 2 0 0 1 2 2V7" stroke="#e8e8e8" stroke-width="1.600" fill="none"/><rect x="1.500" y="7" width="25" height="20" rx="2.500" fill="#f2f2f2"/><rect x="8.500" y="10.500" width="5" height="5" fill="#f25022"/><rect x="14.500" y="10.500" width="5" height="5" fill="#7fba00"/><rect x="8.500" y="16.500" width="5" height="5" fill="#00a4ef"/><rect x="14.500" y="16.500" width="5" height="5" fill="#ffb900"/></svg>
 <!-- edge -->
 <svg class="abs" style="left:557px;top:8px" width="28" height="28" viewBox="0 0 28 28"><circle cx="14" cy="14" r="13" fill="#1c7fd6"/><path d="M1.500 17a13 13 0 0 1 25-6c-4-5-13-5-14 2 3-3 9-1 8 4 3-1 5-3 5.500-6A13 13 0 0 1 1.500 17z" fill="#3ccf8e"/><path d="M9 14c0 8 8 12 15 8a13 13 0 0 1-22-5c1-5 6-8 11-7-3 0-4 2-4 4z" fill="#0c59a4"/></svg>
 <!-- explorer active -->
 <div class="tb" style="left:600px;width:54px;background:#3e4c59"></div>
 <svg class="abs" style="left:613px;top:9px" width="28" height="26" viewBox="0 0 28 26"><path d="M1 2h9l2 3h15v5H1z" fill="#e8a92e"/><rect x="1" y="7" width="26" height="16" fill="#fcd667"/><rect x="7" y="15" width="14" height="8" fill="#3b8fd9"/><rect x="10" y="18" width="8" height="5" fill="#fcd667"/></svg>
 <div class="ul" style="left:600px;width:54px"></div>
 <!-- chrome -->
 <svg class="abs" style="left:667.400px;top:8px" width="28" height="28" viewBox="0 0 28 28"><circle cx="14" cy="14" r="13" fill="#fbc116"/><path d="M14 14L2.700 7.500A13 13 0 0 1 25.300 7.500z" fill="#e33b2e"/><path d="M14 14L2.700 7.500A13 13 0 0 0 8.500 25.800z" fill="#2da94f"/><path d="M2.700 7.500A13 13 0 0 1 25.300 7.500H14z" fill="#e33b2e"/><circle cx="14" cy="14" r="6" fill="#fff"/><circle cx="14" cy="14" r="4.600" fill="#3a7fe8"/></svg>
 <div class="ul" style="left:659.800px;width:43.800px"></div>
 <!-- autodesk -->
 <svg class="abs" style="left:721px;top:9px" width="28" height="26" viewBox="0 0 28 26"><rect x="1" y="1" width="26" height="21" rx="1.500" fill="#f4f4f4"/><path d="M4 18c5-1 8-9 19-10v3c-7 0-9 5-12 7z" fill="#222"/><rect x="8" y="23" width="12" height="1.500" fill="#ddd"/></svg>
 <div class="ul" style="left:714.400px;width:41.800px"></div>
 <!-- tray -->
 <svg class="abs" style="left:1310px;top:8px" width="270" height="30" viewBox="0 0 270 30"><g stroke="#fff" stroke-width="1.500" fill="none"><path d="M12 17.500l6-6 6 6"/><rect x="50" y="9.500" width="8" height="11" rx="1"/><path d="M52 7h4M52 23h4"/><path d="M117 22a10 10 0 0 1 10-10M121.500 22a5.500 5.500 0 0 1 5.500-5.500" stroke="#aaa"/><path d="M150 12.500h3.500l4.500-4v12l-4.500-4H150zM162 10a6 6 0 0 1 0 9M165 7.500a9.500 9.500 0 0 1 0 14"/></g><path d="M82 20.500a4 4 0 0 1 .5-8 6 6 0 0 1 11.500 1 3.600 3.600 0 0 1 0 7z" fill="#fff"/><circle cx="126" cy="21" r="1.500" fill="#ccc"/><rect x="187" y="9" width="16" height="10" rx="1" fill="#fff"/><rect x="185" y="11" width="3" height="3" fill="#fff"/><g stroke="#fff" stroke-width="1.600" fill="none"><circle cx="231" cy="17" r="3.500"/><circle cx="238.500" cy="10" r="3.500"/><path d="M233.500 14.500l2.500-2.500"/></g></svg>
 <div class="tray" style="left:1560px;width:90px;top:5.400px">6:43 PM</div>
 <div class="tray" style="left:1560px;width:90px;top:26.200px">7/27/2022</div>
 <svg class="abs" style="left:1652px;top:9px" width="30" height="30" viewBox="0 0 30 30"><path d="M2 2h18v14H8l-3 3.500V16H2z" fill="#fff"/><g stroke="#1c2c3b" stroke-width="1"><path d="M5 6h12M5 9h12M5 12h8"/></g><circle cx="19" cy="19" r="6.500" fill="#1c2c3b" stroke="#fff" stroke-width="1"/><text x="19" y="22.500" font-family="Liberation Sans, sans-serif" font-size="9.500" fill="#fff" text-anchor="middle">4</text></svg>
 <div class="abs" style="left:1693.500px;top:0;width:1px;height:44.800px;background:#6a7885"></div>
</div>
</div>
</body></html>
